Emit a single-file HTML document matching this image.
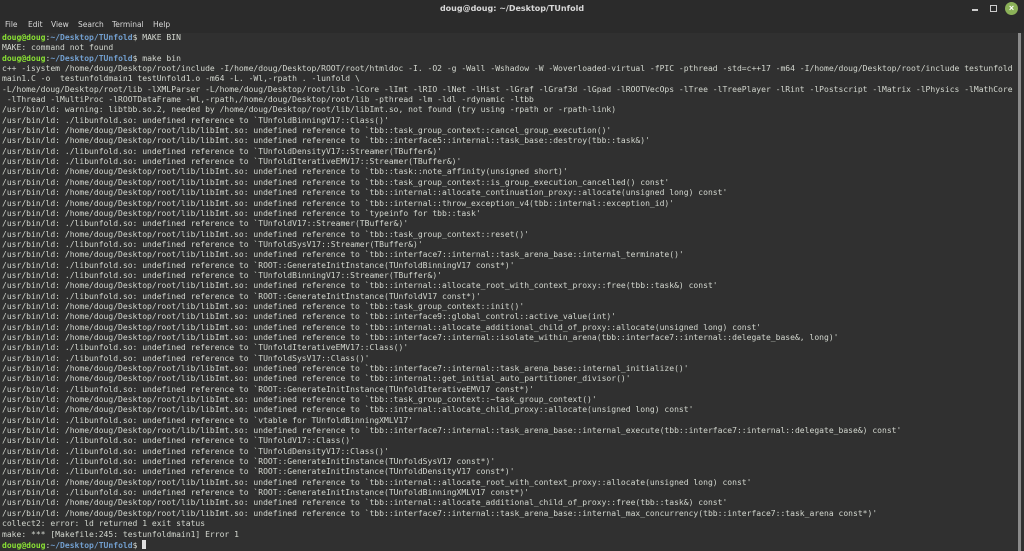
<!DOCTYPE html>
<html><head><meta charset="utf-8"><style>
html,body{margin:0;padding:0;width:1024px;height:551px;overflow:hidden;background:#303030;}
.title{position:absolute;left:0;top:0;width:1024px;height:17px;background:#2b2b2b;color:#d8d8d8;font:bold 8px "DejaVu Sans","Liberation Sans",sans-serif;text-align:center;line-height:17px;}
.menu{position:absolute;left:0;top:17px;width:1024px;height:16px;background:#2b2b2b;color:#d8d8d8;font:7.5px "DejaVu Sans","Liberation Sans",sans-serif;}
.menu span{position:absolute;top:3px;}
.term{position:absolute;left:2px;top:33px;margin:0;font-family:"DejaVu Sans Mono","Liberation Mono",monospace;font-size:8.04px;line-height:10.35px;color:#d3d7cf;white-space:pre;}
.g{color:#8ae234;font-weight:bold}.b{color:#729fcf;font-weight:bold}
.cur{display:inline-block;width:4px;height:9px;background:#e0e0e0;vertical-align:-1px}
.sb{position:absolute;left:1018px;top:33px;width:3px;height:518px;background:#8a8a8a;}
</style></head><body>
<div class="title">doug@doug: ~/Desktop/TUnfold</div>
<div style="position:absolute;left:972px;top:9px;width:6px;height:1.5px;background:#ccc"></div>
<div style="position:absolute;left:990px;top:5px;width:5px;height:5px;border:1px solid #ccc"></div>
<div style="position:absolute;left:1005px;top:2px;width:13px;height:13px;border-radius:50%;background:#8bb158;color:#fff;font:bold 9px sans-serif;text-align:center;line-height:13px">×</div>
<div class="menu"><span style="left:5px">File</span><span style="left:28px">Edit</span><span style="left:51px">View</span><span style="left:78px">Search</span><span style="left:112px">Terminal</span><span style="left:153px">Help</span></div>
<div class="sb"></div>
<pre class="term"><span class="g">doug@doug</span>:<span class="b">~/Desktop/TUnfold</span>$ MAKE BIN
MAKE: command not found
<span class="g">doug@doug</span>:<span class="b">~/Desktop/TUnfold</span>$ make bin
c++ -isystem /home/doug/Desktop/root/include -I/home/doug/Desktop/ROOT/root/htmldoc -I. -O2 -g -Wall -Wshadow -W -Woverloaded-virtual -fPIC -pthread -std=c++17 -m64 -I/home/doug/Desktop/root/include testunfold
main1.C -o  testunfoldmain1 testUnfold1.o -m64 -L. -Wl,-rpath . -lunfold \
-L/home/doug/Desktop/root/lib -lXMLParser -L/home/doug/Desktop/root/lib -lCore -lImt -lRIO -lNet -lHist -lGraf -lGraf3d -lGpad -lROOTVecOps -lTree -lTreePlayer -lRint -lPostscript -lMatrix -lPhysics -lMathCore
 -lThread -lMultiProc -lROOTDataFrame -Wl,-rpath,/home/doug/Desktop/root/lib -pthread -lm -ldl -rdynamic -ltbb
/usr/bin/ld: warning: libtbb.so.2, needed by /home/doug/Desktop/root/lib/libImt.so, not found (try using -rpath or -rpath-link)
/usr/bin/ld: ./libunfold.so: undefined reference to `TUnfoldBinningV17::Class()'
/usr/bin/ld: /home/doug/Desktop/root/lib/libImt.so: undefined reference to `tbb::task_group_context::cancel_group_execution()'
/usr/bin/ld: /home/doug/Desktop/root/lib/libImt.so: undefined reference to `tbb::interface5::internal::task_base::destroy(tbb::task&amp;)'
/usr/bin/ld: ./libunfold.so: undefined reference to `TUnfoldDensityV17::Streamer(TBuffer&amp;)'
/usr/bin/ld: ./libunfold.so: undefined reference to `TUnfoldIterativeEMV17::Streamer(TBuffer&amp;)'
/usr/bin/ld: /home/doug/Desktop/root/lib/libImt.so: undefined reference to `tbb::task::note_affinity(unsigned short)'
/usr/bin/ld: /home/doug/Desktop/root/lib/libImt.so: undefined reference to `tbb::task_group_context::is_group_execution_cancelled() const'
/usr/bin/ld: /home/doug/Desktop/root/lib/libImt.so: undefined reference to `tbb::internal::allocate_continuation_proxy::allocate(unsigned long) const'
/usr/bin/ld: /home/doug/Desktop/root/lib/libImt.so: undefined reference to `tbb::internal::throw_exception_v4(tbb::internal::exception_id)'
/usr/bin/ld: /home/doug/Desktop/root/lib/libImt.so: undefined reference to `typeinfo for tbb::task'
/usr/bin/ld: ./libunfold.so: undefined reference to `TUnfoldV17::Streamer(TBuffer&amp;)'
/usr/bin/ld: /home/doug/Desktop/root/lib/libImt.so: undefined reference to `tbb::task_group_context::reset()'
/usr/bin/ld: ./libunfold.so: undefined reference to `TUnfoldSysV17::Streamer(TBuffer&amp;)'
/usr/bin/ld: /home/doug/Desktop/root/lib/libImt.so: undefined reference to `tbb::interface7::internal::task_arena_base::internal_terminate()'
/usr/bin/ld: ./libunfold.so: undefined reference to `ROOT::GenerateInitInstance(TUnfoldBinningV17 const*)'
/usr/bin/ld: ./libunfold.so: undefined reference to `TUnfoldBinningV17::Streamer(TBuffer&amp;)'
/usr/bin/ld: /home/doug/Desktop/root/lib/libImt.so: undefined reference to `tbb::internal::allocate_root_with_context_proxy::free(tbb::task&amp;) const'
/usr/bin/ld: ./libunfold.so: undefined reference to `ROOT::GenerateInitInstance(TUnfoldV17 const*)'
/usr/bin/ld: /home/doug/Desktop/root/lib/libImt.so: undefined reference to `tbb::task_group_context::init()'
/usr/bin/ld: /home/doug/Desktop/root/lib/libImt.so: undefined reference to `tbb::interface9::global_control::active_value(int)'
/usr/bin/ld: /home/doug/Desktop/root/lib/libImt.so: undefined reference to `tbb::internal::allocate_additional_child_of_proxy::allocate(unsigned long) const'
/usr/bin/ld: /home/doug/Desktop/root/lib/libImt.so: undefined reference to `tbb::interface7::internal::isolate_within_arena(tbb::interface7::internal::delegate_base&amp;, long)'
/usr/bin/ld: ./libunfold.so: undefined reference to `TUnfoldIterativeEMV17::Class()'
/usr/bin/ld: ./libunfold.so: undefined reference to `TUnfoldSysV17::Class()'
/usr/bin/ld: /home/doug/Desktop/root/lib/libImt.so: undefined reference to `tbb::interface7::internal::task_arena_base::internal_initialize()'
/usr/bin/ld: /home/doug/Desktop/root/lib/libImt.so: undefined reference to `tbb::internal::get_initial_auto_partitioner_divisor()'
/usr/bin/ld: ./libunfold.so: undefined reference to `ROOT::GenerateInitInstance(TUnfoldIterativeEMV17 const*)'
/usr/bin/ld: /home/doug/Desktop/root/lib/libImt.so: undefined reference to `tbb::task_group_context::~task_group_context()'
/usr/bin/ld: /home/doug/Desktop/root/lib/libImt.so: undefined reference to `tbb::internal::allocate_child_proxy::allocate(unsigned long) const'
/usr/bin/ld: ./libunfold.so: undefined reference to `vtable for TUnfoldBinningXMLV17'
/usr/bin/ld: /home/doug/Desktop/root/lib/libImt.so: undefined reference to `tbb::interface7::internal::task_arena_base::internal_execute(tbb::interface7::internal::delegate_base&amp;) const'
/usr/bin/ld: ./libunfold.so: undefined reference to `TUnfoldV17::Class()'
/usr/bin/ld: ./libunfold.so: undefined reference to `TUnfoldDensityV17::Class()'
/usr/bin/ld: ./libunfold.so: undefined reference to `ROOT::GenerateInitInstance(TUnfoldSysV17 const*)'
/usr/bin/ld: ./libunfold.so: undefined reference to `ROOT::GenerateInitInstance(TUnfoldDensityV17 const*)'
/usr/bin/ld: /home/doug/Desktop/root/lib/libImt.so: undefined reference to `tbb::internal::allocate_root_with_context_proxy::allocate(unsigned long) const'
/usr/bin/ld: ./libunfold.so: undefined reference to `ROOT::GenerateInitInstance(TUnfoldBinningXMLV17 const*)'
/usr/bin/ld: /home/doug/Desktop/root/lib/libImt.so: undefined reference to `tbb::internal::allocate_additional_child_of_proxy::free(tbb::task&amp;) const'
/usr/bin/ld: /home/doug/Desktop/root/lib/libImt.so: undefined reference to `tbb::interface7::internal::task_arena_base::internal_max_concurrency(tbb::interface7::task_arena const*)'
collect2: error: ld returned 1 exit status
make: *** [Makefile:245: testunfoldmain1] Error 1
<span class="g">doug@doug</span>:<span class="b">~/Desktop/TUnfold</span>$ <span class="cur"></span></pre>
</body></html>
